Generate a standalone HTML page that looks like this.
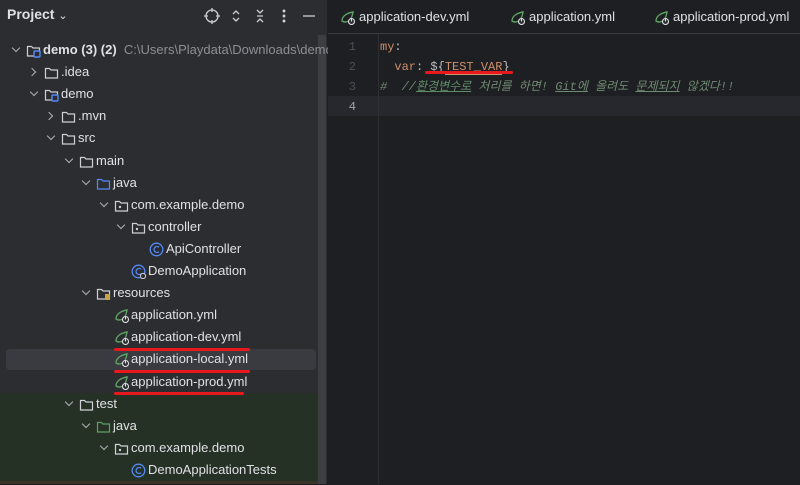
<!DOCTYPE html>
<html><head><meta charset="utf-8"><style>
*{margin:0;padding:0;box-sizing:border-box}
body{width:800px;height:484px;overflow:hidden;background:#1e1f22;font-family:"Liberation Sans","Noto Sans CJK KR",sans-serif;font-size:13px;color:#dfe1e5;position:relative}
#side{position:absolute;left:0;top:0;width:327px;height:484px;background:#2b2d30}
.row{position:absolute;height:22px;line-height:22px;white-space:nowrap}
.chev{position:absolute;width:6px;height:6px;border-right:1.3px solid #aeb1b6;border-bottom:1.3px solid #aeb1b6}
.down{transform:rotate(45deg)}
.right{transform:rotate(-45deg)}
.ic{position:absolute;top:4px}
.t{position:absolute}
#edit{position:absolute;left:328px;top:0;right:0;bottom:0;background:#1e1f22}
.mono{font-family:"Liberation Mono","Noto Sans CJK KR",monospace;font-size:12px}
.red{position:absolute;height:3px;background:#e8191c;border-radius:2px}
</style></head><body>
<div id="side">
 <div style="position:absolute;left:0;top:393px;width:318px;height:88px;background:#263126"></div>
 <div style="position:absolute;left:0;top:481px;width:318px;height:3px;background:#3a3327"></div>
 <div style="position:absolute;left:7px;top:6px;font-size:14px;font-weight:bold;color:#dfe1e5">Project <span style="font-weight:normal;font-size:11px">&#8964;</span></div>
 <svg style="position:absolute;left:200px;top:6px" width="125" height="20" viewBox="0 0 125 20" fill="none" stroke="#ced0d6" stroke-width="1.3">
  <circle cx="12" cy="10" r="6"/><path d="M12 2v4M12 14v4M4 10h4M16 10h4"/>
  <path d="M33 8l3-3 3 3M33 12l3 3 3-3"/>
  <path d="M57 4l3 3 3-3M57 16l3-3 3 3M57 10h6"/>
  <circle cx="84" cy="5" r=".8" fill="#ced0d6"/><circle cx="84" cy="10" r=".8" fill="#ced0d6"/><circle cx="84" cy="15" r=".8" fill="#ced0d6"/>
  <path d="M103 10h12"/>
 </svg>
 <div style="position:absolute;left:318px;top:35px;width:8px;height:449px;background:#3c3e42"></div>
 <div style="position:absolute;left:6px;top:349px;width:310px;height:21px;background:#393b40;border-radius:4px"></div>
 <div id="tree"></div>
 <div class="red" style="left:114px;top:348px;width:136px"></div>
 <div class="red" style="left:114px;top:370px;width:136px"></div>
 <div class="red" style="left:114px;top:392px;width:130px"></div>
</div>
<div id="edit">
 <div style="position:absolute;left:0;top:0;right:0;height:34px;border-bottom:1px solid #393b40"></div>
 <div style="position:absolute;left:0;top:96px;right:0;height:20px;background:#26282e"></div>
 <div style="position:absolute;left:50px;top:34px;width:1px;bottom:0;background:#2d2f33"></div>
 <div id="tabs"></div>
 <div class="mono" style="position:absolute;left:0;top:37px;width:28px;text-align:right;line-height:20px;color:#4b5059">1<br>2<br>3<br><span style="color:#a1a3ab">4</span></div>
 <div class="mono" style="position:absolute;left:52px;top:37px;line-height:20px;white-space:pre;color:#bcbec4"><span style="color:#cf8e6d">my</span>:
  <span style="color:#cf8e6d">var</span>: ${<span style="color:#cf8e6d;border-bottom:1px solid #cf8e6d;line-height:13px;display:inline-block">TEST_VAR</span>}
<span style="color:#6f8a73;font-style:italic">#  //<u style="color:#5f8c6a">환경변수로</u> 처리를 하면! <u>Git에</u> 올려도 <u>문제되지</u> 않겠다!!</span></div>
 <div class="red" style="left:97px;top:71px;width:88px"></div>
</div>
<script>
var L=[43,61,78,96,113,131,148,166];
var rows=[
[0,'d','pm','demo (3) (2)',1],[1,'r','f','.idea'],[1,'d','pm','demo'],[2,'r','f','.mvn'],[2,'d','f','src'],[3,'d','f','main'],[4,'d','fb','java'],[5,'d','pk','com.example.demo'],[6,'d','pk','controller'],[7,'','c','ApiController'],[6,'','ca','DemoApplication'],[4,'d','fr','resources'],[5,'','y','application.yml'],[5,'','y','application-dev.yml'],[5,'','y','application-local.yml'],[5,'','y','application-prod.yml'],[3,'d','f','test'],[4,'d','fg','java'],[5,'d','pk','com.example.demo'],[6,'','c','DemoApplicationTests']];
function icon(k){
 var f='<path d="M1.5 3.5h4l1.5 1.5h6.5v8h-12z" fill="none" stroke="COL" stroke-width="1.2"/>';
 if(k=='f')return '<svg width="16" height="15">'+f.replace('COL','#ced0d6')+'</svg>';
 if(k=='fb')return '<svg width="16" height="15">'+f.replace('COL','#548af7')+'</svg>';
 if(k=='fg')return '<svg width="16" height="15">'+f.replace('COL','#5fa065')+'</svg>';
 if(k=='pm')return '<svg width="16" height="15">'+f.replace('COL','#ced0d6')+'<rect x="8" y="8" width="6" height="6" rx="1" fill="#2b2d30" stroke="#548af7" stroke-width="1.4"/></svg>';
 if(k=='fr')return '<svg width="16" height="15">'+f.replace('COL','#ced0d6')+'<rect x="9" y="8" width="5" height="6" fill="#c9a34a"/></svg>';
 if(k=='pk')return '<svg width="16" height="15">'+f.replace('COL','#ced0d6')+'<circle cx="6" cy="9" r="1.2" fill="#ced0d6"/></svg>';
 if(k=='c'||k=='ca')return '<svg width="16" height="15"><circle cx="7.5" cy="7.5" r="6.3" fill="none" stroke="#548af7" stroke-width="1.3"/><path d="M10 5.2a3 3 0 1 0 0 4.6" fill="none" stroke="#548af7" stroke-width="1.3"/>'+(k=='ca'?'<circle cx="12" cy="12" r="2.6" fill="#2b2d30" stroke="#ced0d6" stroke-width="1"/>':'')+'</svg>';
 if(k=='y')return '<svg width="16" height="15"><path d="M2 11c0-5 5-8 11-9-1 6-3 10-8 10-1 0-2-.3-3-1z" fill="none" stroke="#5fa065" stroke-width="1.4"/><circle cx="11.5" cy="11.5" r="3" fill="#2b2d30" stroke="#dfe1e5" stroke-width="1.1"/><path d="M11.5 9v2.5" stroke="#dfe1e5" stroke-width="1.1"/></svg>';
}
var h='';
rows.forEach(function(r,i){
 var top=39+i*22.1, x=L[r[0]];
 h+='<div class="row" style="left:0;top:'+top+'px;width:318px">';
 if(r[1]=='d')h+='<div class="chev down" style="left:'+(x-30)+'px;top:6px"></div>';
 if(r[1]=='r')h+='<div class="chev right" style="left:'+(x-32)+'px;top:8px"></div>';
 h+='<div class="ic" style="left:'+(x-17)+'px">'+icon(r[2])+'</div>';
 h+='<div class="t" style="left:'+x+'px'+(r[4]?';font-weight:bold':'')+'">'+r[3]+(r[4]?' <span style="font-weight:normal;color:#8c8f96">&nbsp;C:\\Users\\Playdata\\Downloads\\demo</span>':'')+'</div></div>';
});
document.getElementById('tree').innerHTML=h;
var tabs=[[12,'application-dev.yml'],[182,'application.yml'],[326,'application-prod.yml']],t='';
tabs.forEach(function(a){t+='<div class="row" style="left:'+a[0]+'px;top:6px"><div class="ic" style="left:0">'+icon('y')+'</div><div class="t" style="left:19px">'+a[1]+'</div></div>';});
document.getElementById('tabs').innerHTML=t;
</script>
</body></html>
